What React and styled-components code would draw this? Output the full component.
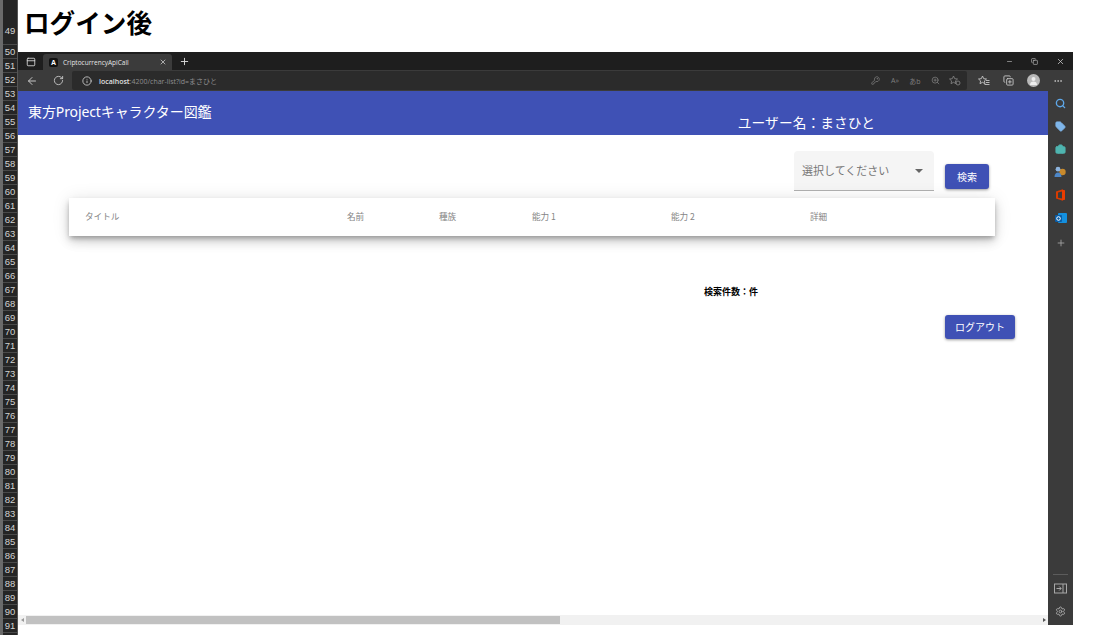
import React from "react";
import styled, { createGlobalStyle } from "styled-components";
import {
  ArrowLeft,
  RotateCw,
  Info,
  Plus,
  X,
  Minus,
  Copy,
  PanelTop,
  KeyRound,
  ZoomIn,
  CopyPlus,
  MoreHorizontal,
  Settings,
  Search,
  Tag,
  Briefcase,
} from "lucide-react";

const JP = `"Noto Sans CJK JP", "Noto Sans", "Liberation Sans", sans-serif`;
const lineNumbers = Array.from({ length: 42 }, (_, i) => 50 + i);
const columns = ["タイトル", "名前", "種族", "能力 1", "能力 2", "詳細"];

const Global = createGlobalStyle`
  html, body { margin: 0; padding: 0; background: #fff; overflow: hidden; }
  body { font-family: ${JP}; }
`;

const Page = styled.div`
  display: flex;
  width: 1094px;
  height: 635px;
  overflow: hidden;
`;

const Gutter = styled.div`
  width: 14px;
  flex: none;
  background: #252525;
  border-left: 3px solid #6a6a6a;
  border-right: 1px solid #555;
  color: #d2d2d2;
  font: 9.5px "Liberation Sans", sans-serif;
  text-align: center;
`;

const LineNumber = styled.div`
  height: ${(p) => p.$h}px;
  padding-top: ${(p) => p.$top || 0}px;
  display: flex;
  align-items: center;
  justify-content: center;
  box-sizing: border-box;
  border-bottom: 1px solid #4a4a4a;
`;

const Main = styled.div`
  flex: 1;
  min-width: 0;
  display: flex;
  flex-direction: column;
`;

const Heading = styled.h1`
  height: 52px;
  margin: 0;
  padding: 3px 0 0 6px;
  box-sizing: border-box;
  font: 700 25.6px/38px ${JP};
  color: #000;
`;

const Browser = styled.div`
  width: 1055px;
  height: 573px;
  display: flex;
  flex-direction: column;
  background: #fff;
`;

const TabStrip = styled.div`
  height: 18px;
  flex: none;
  display: flex;
  align-items: flex-end;
  background: #1e1e1e;
  color: #ddd;
`;

const StripIcon = styled.div`
  width: 25px;
  height: 18px;
  padding-top: 1px;
  box-sizing: border-box;
  display: flex;
  align-items: center;
  justify-content: center;
`;

const Tab = styled.div`
  width: 129px;
  height: 16px;
  box-sizing: border-box;
  padding: 0 5px 0 6px;
  display: flex;
  align-items: center;
  gap: 5px;
  background: #3b3b3b;
  border-radius: 3px 3px 0 0;
  font: 6.5px "Open Sans", sans-serif;
  color: #e4e4e4;
`;

const Favicon = styled.span`
  width: 9px;
  height: 9px;
  border-radius: 2px;
  background: #111;
  color: #fff;
  font: 700 7px/9px "Liberation Sans", sans-serif;
  text-align: center;
`;

const TabTitle = styled.span`
  flex: 1;
`;

const NewTab = styled.div`
  width: 24px;
  height: 18px;
  display: flex;
  align-items: center;
  justify-content: center;
`;

const WindowControls = styled.div`
  margin-left: auto;
  height: 18px;
  display: flex;
  align-items: center;
  color: #ccc;
`;

const WindowButton = styled.div`
  width: 25.5px;
  display: flex;
  justify-content: center;
`;

const Toolbar = styled.div`
  height: 21px;
  flex: none;
  display: flex;
  align-items: center;
  background: #3b3b3b;
  color: #c4c4c4;
  box-sizing: border-box;
  padding-left: 1px;
`;

const NavButton = styled.div`
  width: 26.5px;
  display: flex;
  justify-content: center;
`;

const AddressBar = styled.div`
  width: 895px;
  height: 19px;
  background: #2b2b2b;
  border-radius: 2px;
  display: flex;
  align-items: center;
  box-sizing: border-box;
  padding: 0 2px 0 10px;
  font: 7px "Open Sans", ${JP};
  color: #8d8d8d;
`;

const Host = styled.span`
  color: #e0e0e0;
  font-weight: 600;
`;

const Url = styled.span`
  margin-left: 7px;
`;

const AddressIcons = styled.div`
  margin-left: auto;
  display: flex;
  align-items: center;
  color: #7f7f7f;
  font: 7px "Open Sans", ${JP};
`;

const AddressIcon = styled.span`
  width: 20px;
  display: flex;
  justify-content: center;
`;

const ToolButtons = styled.div`
  display: flex;
  align-items: center;
  gap: 13px;
  padding-left: 11px;
`;

const Avatar = styled.span`
  width: 13px;
  height: 13px;
  border-radius: 50%;
  background: #b9b9b9;
  display: flex;
  align-items: center;
  justify-content: center;
`;

const Body = styled.div`
  flex: 1;
  min-height: 0;
  display: flex;
`;

const Viewport = styled.div`
  flex: 1;
  min-width: 0;
  display: flex;
  flex-direction: column;
`;

const AppHeader = styled.header`
  height: 44px;
  flex: none;
  display: flex;
  background: #3f51b5;
  color: #fff;
  box-sizing: border-box;
  padding: 0 173px 0 10px;
  justify-content: space-between;
`;

const AppTitle = styled.div`
  font: 400 14px/22px "Noto Sans", ${JP};
  padding-top: 10px;
  letter-spacing: -0.1px;
`;

const UserName = styled.div`
  font: 400 13.7px/22px ${JP};
  padding-top: 20px;
  letter-spacing: 0.1px;
`;

const Content = styled.main`
  flex: 1;
  min-height: 0;
  display: flex;
  flex-direction: column;
`;

const SearchRow = styled.div`
  display: flex;
  align-items: flex-end;
  gap: 11px;
  padding: 16px 0 0 776px;
`;

const SelectBox = styled.div`
  width: 140px;
  height: 40px;
  box-sizing: border-box;
  padding: 0 11px 2px 8px;
  background: #f5f5f5;
  border-bottom: 1px solid #b0b0b0;
  border-radius: 4px 4px 0 0;
  display: flex;
  align-items: center;
  justify-content: space-between;
  font: 400 11px ${JP};
  color: #757575;
`;

const Caret = styled.span`
  width: 0;
  height: 0;
  border-left: 4px solid transparent;
  border-right: 4px solid transparent;
  border-top: 4px solid #666;
  margin-top: 2px;
`;

const RaisedButton = styled.button`
  height: ${(p) => p.$h}px;
  width: ${(p) => p.$w}px;
  margin-bottom: ${(p) => p.$below || 0}px;
  border: 0;
  padding: 0;
  border-radius: 3px;
  background: #3f51b5;
  color: #fff;
  font: 400 10px ${JP};
  box-shadow: 0 1px 3px rgba(0, 0, 0, 0.4);
`;

const Table = styled.div`
  width: 926px;
  height: 38px;
  margin: 7px 0 0 51px;
  background: #fff;
  box-sizing: border-box;
  padding: 0 0 2px 16px;
  display: grid;
  grid-template-columns: 262px 92px 93px 139px 139px 1fr;
  align-items: center;
  box-shadow: 0 3px 5px -1px rgba(0, 0, 0, 0.3), 0 6px 10px 0 rgba(0, 0, 0, 0.14),
    0 1px 18px 0 rgba(0, 0, 0, 0.1);
`;

const HeaderCell = styled.div`
  font: 400 8.6px ${JP};
  color: #858585;
`;

const CountRow = styled.div`
  padding: 50px 0 0 686px;
  font: 700 9px/12px ${JP};
  color: #000;
`;

const LogoutRow = styled.div`
  padding: 14px 0 0 927px;
`;

const ScrollBar = styled.div`
  height: 10px;
  flex: none;
  display: flex;
  align-items: center;
  background: #f1f1f1;
`;

const ScrollArrow = styled.span`
  width: 8px;
  flex: none;
  display: flex;
  justify-content: center;
  &::before {
    content: "";
    border-top: 2px solid transparent;
    border-bottom: 2px solid transparent;
    ${(p) => (p.$right ? "border-left: 3px solid #555;" : "border-right: 3px solid #999;")}
  }
`;

const ScrollThumb = styled.div`
  width: 534px;
  height: 8px;
  background: #c1c1c1;
`;

const ScrollTrack = styled.div`
  flex: 1;
`;

const SideBar = styled.aside`
  width: 25px;
  flex: none;
  background: #3b3b3b;
  display: flex;
  flex-direction: column;
  align-items: center;
  padding: 5px 0 7px;
  box-sizing: border-box;
  gap: 9px;
  color: #a8a8a8;
`;

const SideIcon = styled.div`
  width: 14px;
  height: 14px;
  margin-top: ${(p) => p.$top || 0}px;
  display: flex;
  align-items: center;
  justify-content: center;
`;

const SideDivider = styled.div`
  width: 15px;
  height: 1px;
  background: #5c5c5c;
  margin-top: auto;
  margin-bottom: -3px;
`;

function OfficeIcon() {
  return (
    <svg width="11" height="12" viewBox="0 0 11 12">
      <path d="M1 2.6 7 .5l3 1v9l-3 1-6-2z" fill="#d83b01" />
      <path d="M3 3.5 7 2.5v7l-4-.8z" fill="#3b3b3b" />
      <path d="M7 .5l3 1v9l-3 1z" fill="#eb3c00" />
    </svg>
  );
}

function OutlookIcon() {
  return (
    <svg width="12" height="12" viewBox="0 0 12 12">
      <rect x="3" y="1" width="9" height="10" rx="1" fill="#1490df" />
      <rect x="0" y="3" width="7" height="7" rx="1" fill="#0a5ea8" />
      <circle cx="3.5" cy="6.5" r="1.8" fill="none" stroke="#fff" strokeWidth="1" />
    </svg>
  );
}

function PeopleIcon() {
  return (
    <svg width="13" height="12" viewBox="0 0 13 12">
      <circle cx="8.5" cy="6" r="3.2" fill="#c98a2c" />
      <circle cx="4" cy="3.2" r="2.4" fill="#8db4de" />
      <path d="M.5 11c0-3 1.5-4.6 3.5-4.6S7.5 8 7.5 11z" fill="#4d86c6" />
    </svg>
  );
}

function StarIcon({ lines }) {
  return (
    <svg width="12" height="11" viewBox="0 0 12 11" fill="none" stroke="currentColor" strokeWidth="0.9">
      <path d="M4.5 1 5.7 3.7l2.8.3-2.1 1.9.6 2.8-2.5-1.4L2 8.7l.6-2.8L.5 4l2.8-.3z" />
      {lines ? (
        <path d="M8 5.5h3.5M8 7.5h3.5M6.5 9.5h5" />
      ) : (
        <circle cx="9" cy="8" r="2" />
      )}
    </svg>
  );
}

function SidePanelIcon() {
  return (
    <svg width="13" height="11" viewBox="0 0 13 11" fill="none" stroke="currentColor" strokeWidth="1">
      <rect x="0.5" y="1" width="12" height="9" />
      <path d="M9 1v9M2.5 5.5h4.5M5.2 3.5l2 2-2 2" />
    </svg>
  );
}

export default function App() {
  return (
    <Page>
      <Global />
      <Gutter>
        <LineNumber $h={45} $top={17}>
          49
        </LineNumber>
        {lineNumbers.map((n) => (
          <LineNumber key={n} $h={14}>
            {n}
          </LineNumber>
        ))}
      </Gutter>
      <Main>
        <Heading>ログイン後</Heading>
        <Browser>
          <TabStrip>
            <StripIcon>
              <PanelTop size={10} />
            </StripIcon>
            <Tab>
              <Favicon>A</Favicon>
              <TabTitle>CriptocurrencyApiCall</TabTitle>
              <X size={8} />
            </Tab>
            <NewTab>
              <Plus size={11} />
            </NewTab>
            <WindowControls>
              <WindowButton>
                <Minus size={7} />
              </WindowButton>
              <WindowButton>
                <Copy size={7} />
              </WindowButton>
              <WindowButton>
                <X size={9} />
              </WindowButton>
            </WindowControls>
          </TabStrip>
          <Toolbar>
            <NavButton>
              <ArrowLeft size={12} />
            </NavButton>
            <NavButton>
              <RotateCw size={11} />
            </NavButton>
            <AddressBar>
              <Info size={10} color="#cfcfcf" />
              <Url>
                <Host>localhost</Host>:4200/char-list?id=まさひと
              </Url>
              <AddressIcons>
                <AddressIcon>
                  <KeyRound size={9} />
                </AddressIcon>
                <AddressIcon>A»</AddressIcon>
                <AddressIcon>あb</AddressIcon>
                <AddressIcon>
                  <ZoomIn size={9} />
                </AddressIcon>
                <AddressIcon>
                  <StarIcon />
                </AddressIcon>
              </AddressIcons>
            </AddressBar>
            <ToolButtons>
              <StarIcon lines />
              <CopyPlus size={11} />
              <Avatar>
                <svg width="9" height="9" viewBox="0 0 9 9">
                  <circle cx="4.5" cy="3" r="2" fill="#eee" />
                  <path d="M1 9c0-2.6 1.5-3.6 3.5-3.6S8 6.4 8 9z" fill="#eee" />
                </svg>
              </Avatar>
              <MoreHorizontal size={10} />
            </ToolButtons>
          </Toolbar>
          <Body>
            <Viewport>
              <AppHeader>
                <AppTitle>東方Projectキャラクター図鑑</AppTitle>
                <UserName>ユーザー名：まさひと</UserName>
              </AppHeader>
              <Content>
                <SearchRow>
                  <SelectBox>
                    選択してください
                    <Caret />
                  </SelectBox>
                  <RaisedButton $w={44} $h={25} $below={2} type="button">
                    検索
                  </RaisedButton>
                </SearchRow>
                <Table>
                  {columns.map((c) => (
                    <HeaderCell key={c}>{c}</HeaderCell>
                  ))}
                </Table>
                <CountRow>検索件数：件</CountRow>
                <LogoutRow>
                  <RaisedButton $w={70} $h={24} type="button">
                    ログアウト
                  </RaisedButton>
                </LogoutRow>
              </Content>
              <ScrollBar>
                <ScrollArrow />
                <ScrollThumb />
                <ScrollTrack />
                <ScrollArrow $right />
              </ScrollBar>
            </Viewport>
            <SideBar>
              <SideIcon>
                <Search size={11} color="#5ea7e8" strokeWidth={3} />
              </SideIcon>
              <SideIcon>
                <Tag size={11} color="#7fb6ea" fill="#7fb6ea" />
              </SideIcon>
              <SideIcon>
                <Briefcase size={11} color="#4fb5b0" fill="#4fb5b0" />
              </SideIcon>
              <SideIcon>
                <PeopleIcon />
              </SideIcon>
              <SideIcon>
                <OfficeIcon />
              </SideIcon>
              <SideIcon>
                <OutlookIcon />
              </SideIcon>
              <SideIcon $top={2}>
                <Plus size={10} />
              </SideIcon>
              <SideDivider />
              <SideIcon>
                <SidePanelIcon />
              </SideIcon>
              <SideIcon>
                <Settings size={11} />
              </SideIcon>
            </SideBar>
          </Body>
        </Browser>
      </Main>
    </Page>
  );
}
